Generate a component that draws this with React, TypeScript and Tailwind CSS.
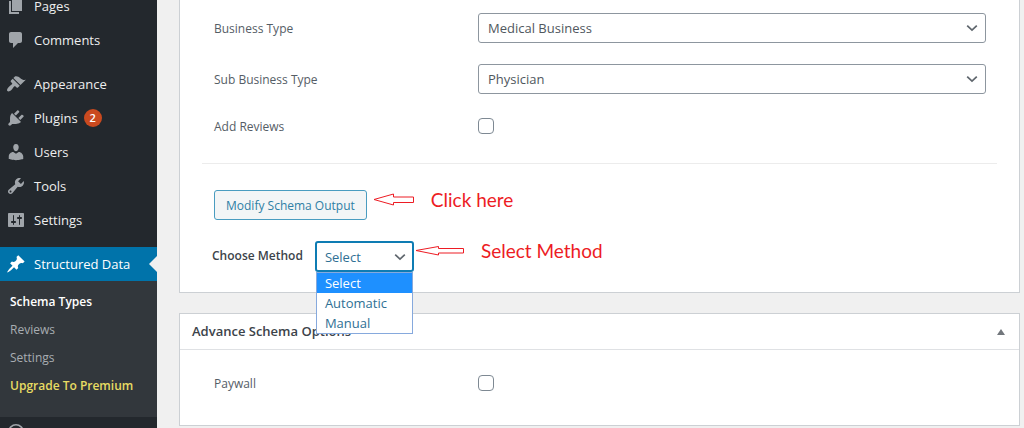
import type { ReactNode } from "react";

const icons = {
  pages: "M6 15V2h10v13H6zm-1 1h8v2H3V5h2v11z",
  comments:
    "M5 2h9c1.1 0 2 .9 2 2v7c0 1.1-.9 2-2 2h-2l-5 5v-5H5c-1.1 0-2-.9-2-2V4c0-1.1.9-2 2-2z",
  appearance:
    "M14.48 11.06L7.41 3.99l1.5-1.5c.5-.56 2.3-.47 3.51.32 1.21.8 1.43 1.28 2.91 2.1 1.18.64 2.45 1.26 4.45.85zm-.71.71L6.7 4.7 4.93 6.47c-.39.39-.39 1.02 0 1.41l1.06 1.06c.39.39.39 1.03 0 1.42-.6.6-1.43 1.11-2.21 1.69-.35.26-.7.53-1.01.84C1.43 14.23.4 16.08 1.4 17.07c.99 1 2.84-.03 4.18-1.36.31-.31.58-.66.85-1.02.57-.78 1.08-1.61 1.69-2.21.39-.39 1.02-.39 1.41 0l1.06 1.06c.39.39 1.02.39 1.41 0z",
  plugins:
    "M13.11 4.36L9.87 7.6 8 5.73l3.24-3.24c.35-.34 1.05-.2 1.56.32.52.51.66 1.21.31 1.55zm-8 1.77l.91-1.12 9.01 9.01-1.19.84c-.71.71-2.63 1.16-3.82 1.16H6.14L4.9 17.26c-.59.59-1.54.59-2.12 0-.59-.58-.59-1.53 0-2.12l1.24-1.24v-3.88c0-1.13.4-3.19 1.09-3.89zm7.26 3.97l3.24-3.24c.34-.35 1.04-.21 1.55.31.52.51.66 1.21.31 1.55l-3.24 3.25z",
  users:
    "M10 9.25c-2.27 0-2.73-3.44-2.73-3.44C7 4.02 7.82 2 9.97 2c2.16 0 2.98 2.02 2.71 3.81 0 0-.41 3.44-2.68 3.44zm0 2.57L12.72 10c2.39 0 4.52 2.33 4.52 4.53v2.49s-3.65 1.13-7.24 1.13c-3.65 0-7.24-1.13-7.24-1.13v-2.49c0-2.25 1.94-4.48 4.47-4.48z",
  tools:
    "M16.68 9.77c-1.34 1.34-3.3 1.67-4.95.99l-5.41 6.52c-.99.99-2.59.99-3.58 0s-.99-2.59 0-3.57l6.52-5.42c-.68-1.65-.35-3.61.99-4.95 1.28-1.28 3.12-1.62 4.72-1.06l-2.89 2.89 2.82 2.82 2.86-2.87c.53 1.58.18 3.39-1.08 4.65zM3.81 16.21c.4.39 1.04.39 1.43 0 .4-.4.4-1.04 0-1.43-.39-.4-1.03-.4-1.43 0-.39.39-.39 1.03 0 1.43z",
  settings:
    "M18 16V4c0-.55-.45-1-1-1H3c-.55 0-1 .45-1 1v12c0 .55.45 1 1 1h14c.55 0 1-.45 1-1zM8 11h1c.55 0 1 .45 1 1s-.45 1-1 1H8v1.5c0 .28-.22.5-.5.5s-.5-.22-.5-.5V13H6c-.55 0-1-.45-1-1s.45-1 1-1h1V5.5c0-.28.22-.5.5-.5s.5.22.5.5V11zm5-2h-1c-.55 0-1-.45-1-1s.45-1 1-1h1V5.5c0-.28.22-.5.5-.5s.5.22.5.5V7h1c.55 0 1 .45 1 1s-.45 1-1 1h-1v5.5c0 .28-.22.5-.5.5s-.5-.22-.5-.5V9z",
  pin: "M10.44 3.02l1.82-1.82 6.36 6.35-1.83 1.82c-1.05-.68-2.48-.57-3.41.36l-.75.75c-.92.93-1.04 2.35-.35 3.41l-1.83 1.82-2.41-2.41-2.8 2.79c-.42.42-3.38 2.71-3.8 2.29s1.86-3.39 2.28-3.81l2.79-2.79L4.1 9.36l1.83-1.82c1.05.69 2.48.57 3.4-.36l.75-.75c.93-.92 1.05-2.35.36-3.41z",
};

function Icon({ path, className }: { path: string; className: string }) {
  return (
    <svg viewBox="0 0 20 20" className={`size-5 shrink-0 ${className}`} aria-hidden="true">
      <path d={path} fill="currentColor" />
    </svg>
  );
}

function MenuItem({ icon, label, badge }: { icon: string; label: string; badge?: string }) {
  return (
    <li>
      <a href="#" className="flex h-[34px] items-center pl-1.5 text-[#eeeeee]">
        <Icon path={icon} className="text-[#a0a5aa]" />
        <span className="pt-0.5 pl-2">{label}</span>
        {badge && (
          <span className="ml-1.5 flex size-[18px] items-center justify-center rounded-full bg-[#ca4a1f] text-[11px] font-semibold text-white">
            {badge}
          </span>
        )}
      </a>
    </li>
  );
}

function Chevron() {
  return (
    <svg
      viewBox="0 0 12 8"
      className="pointer-events-none absolute top-1/2 right-2 h-2 w-3 -translate-y-1/2"
      aria-hidden="true"
    >
      <path d="M1.2 1.7L6 6.200l4.800-4.500" fill="none" stroke="#5f666d" strokeWidth="1.700" />
    </svg>
  );
}

function SelectRow({ id, label, value }: { id: string; label: string; value: string }) {
  return (
    <div className="flex items-center">
      <label htmlFor={id} className="w-[264px] shrink-0 pt-0.5 text-xs">
        {label}
      </label>
      <div className="relative min-w-0 flex-1">
        <select
          id={id}
          defaultValue={value}
          className="block h-[30px] w-full appearance-none rounded-[3px] border border-[#8d969f] bg-white pt-0.5 pr-6 pl-[9px] text-[13px] text-[#50575e]"
        >
          <option>{value}</option>
        </select>
        <Chevron />
      </div>
    </div>
  );
}

function CheckRow({ id, label }: { id: string; label: string }) {
  return (
    <div className="flex items-center">
      <label htmlFor={id} className="w-[264px] shrink-0 pt-0.5 text-xs leading-4">
        {label}
      </label>
      <input
        id={id}
        type="checkbox"
        className="size-4 appearance-none rounded-[4px] border border-[#7e8993] bg-white"
      />
    </div>
  );
}

function Note({ children, arrow }: { children: ReactNode; arrow: ReactNode }) {
  return (
    <div className="flex items-center gap-4 font-['Lato',sans-serif] text-[19px] leading-5 text-[#ed1c24]">
      {arrow}
      <span>{children}</span>
    </div>
  );
}

export default function App() {
  return (
    <div className="flex h-screen overflow-hidden bg-[#f0f0f0] font-['Open_Sans','Noto_Sans',sans-serif] text-[13px] text-[#555d66]">
      <nav className="w-[157px] shrink-0 bg-[#23282d]" aria-label="Admin menu">
        <ul className="-mt-[11px]">
          <MenuItem icon={icons.pages} label="Pages" />
          <MenuItem icon={icons.comments} label="Comments" />
        </ul>
        <ul className="mt-2.5">
          <MenuItem icon={icons.appearance} label="Appearance" />
          <MenuItem icon={icons.plugins} label="Plugins" badge="2" />
          <MenuItem icon={icons.users} label="Users" />
          <MenuItem icon={icons.tools} label="Tools" />
          <MenuItem icon={icons.settings} label="Settings" />
        </ul>
        <a
          href="#"
          className="relative mt-2.5 flex h-[34px] items-center bg-[#0073aa] pl-1.5 text-white"
        >
          <Icon path={icons.pin} className="text-white" />
          <span className="pt-0.5 pl-2">Structured Data</span>
          <span className="absolute top-1/2 right-0 -translate-y-1/2 border-y-8 border-r-8 border-y-transparent border-r-[#f0f0f0]" />
        </a>
        <ul className="bg-[#32373c] pt-[7px] pb-[17px] pl-2.5 text-xs leading-7 text-[#a8adb2]">
          <li>
            <a href="#" className="block font-semibold text-white">
              Schema Types
            </a>
          </li>
          <li>
            <a href="#" className="block">
              Reviews
            </a>
          </li>
          <li>
            <a href="#" className="block">
              Settings
            </a>
          </li>
          <li>
            <a href="#" className="block font-semibold text-[#e8dc63]">
              Upgrade To Premium
            </a>
          </li>
        </ul>
        <button type="button" aria-label="Collapse menu" className="mt-1.5 ml-1.5 block text-[#a0a5aa]">
          <svg viewBox="0 0 20 20" className="size-5" aria-hidden="true">
            <circle cx="10" cy="9" r="7.200" fill="none" stroke="currentColor" strokeWidth="1.600" />
            <path d="M12 5v8L7 9z" fill="currentColor" />
          </svg>
        </button>
      </nav>

      <main className="flex min-w-0 flex-1 flex-col gap-5 pr-1 pl-[22px]">
        <section className="border border-t-0 border-[#ccd0d4] bg-white px-[22px] pb-5">
          <div className="flex flex-col gap-[21px] pt-[13px] pr-[11px] pl-3">
            <SelectRow id="business-type" label="Business Type" value="Medical Business" />
            <SelectRow id="sub-business-type" label="Sub Business Type" value="Physician" />
            <div className="pt-0.5">
              <CheckRow id="add-reviews" label="Add Reviews" />
            </div>
          </div>
          <hr className="mt-7 border-[#ececec]" />
          <div className="mt-[26px] flex items-start gap-1.5 pl-3">
            <button
              type="button"
              className="h-[30px] rounded-[3px] border border-[#4a9cc0] bg-[#f3f5f6] px-[11px] pt-0.5 text-xs whitespace-nowrap text-[#2f7fa5]"
            >
              Modify Schema Output
            </button>
            <Note
              arrow={
                <svg viewBox="0 0 42 14" className="h-3.5 w-[42px]" aria-hidden="true">
                  <path
                    d="M1 6.500L20.500 1v3h20v5.500h-20v2.500z"
                    fill="none"
                    stroke="#ed1c24"
                  />
                </svg>
              }
            >
              Click here
            </Note>
          </div>
          <div className="mt-[21px] flex items-start pl-2.5">
            <label
              htmlFor="method"
              className="mr-3 pt-px text-xs leading-7 font-semibold whitespace-nowrap text-[#3c434a]"
            >
              Choose Method
            </label>
            <div className="relative w-[99px]">
              <select
                id="method"
                defaultValue="Select"
                className="block h-[31px] w-full appearance-none rounded-[3px] border-2 border-[#0e7cb3] bg-white pt-0.5 pr-6 pl-2 text-[13px] text-[#2f7094]"
              >
                <option>Select</option>
                <option>Automatic</option>
                <option>Manual</option>
              </select>
              <Chevron />
              <ul
                role="listbox"
                aria-label="Choose Method"
                className="absolute top-full right-px left-px z-10 border border-[#86a9dd] bg-white text-[13px] leading-5 text-[#2f7094]"
              >
                <li role="option" aria-selected="true" className="bg-[#1e90ff] pl-2 text-white">
                  Select
                </li>
                <li role="option" aria-selected="false" className="pl-2">
                  Automatic
                </li>
                <li role="option" aria-selected="false" className="pl-2">
                  Manual
                </li>
              </ul>
            </div>
            <Note
              arrow={
                <svg viewBox="0 0 50 14" className="ml-px h-3.5 w-[50px]" aria-hidden="true">
                  <path
                    d="M1 6.500L23.500 2.500v2h25v4.500h-25v2z"
                    fill="none"
                    stroke="#ed1c24"
                  />
                </svg>
              }
            >
              Select Method
            </Note>
          </div>
        </section>

        <section className="border border-[#ccd0d4] bg-white">
          <header className="flex h-9 items-center justify-between border-b border-[#dfe1e4] pr-3.5 pl-3">
            <h2 className="pt-px text-[13px] font-semibold text-[#3c434a]">Advance Schema Options</h2>
            <button type="button" aria-label="Toggle panel">
              <svg viewBox="0 0 8 6" className="h-1.5 w-2" aria-hidden="true">
                <path d="M4 0l4 6H0z" fill="#72777c" />
              </svg>
            </button>
          </header>
          <div className="pt-6 pb-[33px] pl-[34px]">
            <CheckRow id="paywall" label="Paywall" />
          </div>
        </section>
      </main>
    </div>
  );
}
